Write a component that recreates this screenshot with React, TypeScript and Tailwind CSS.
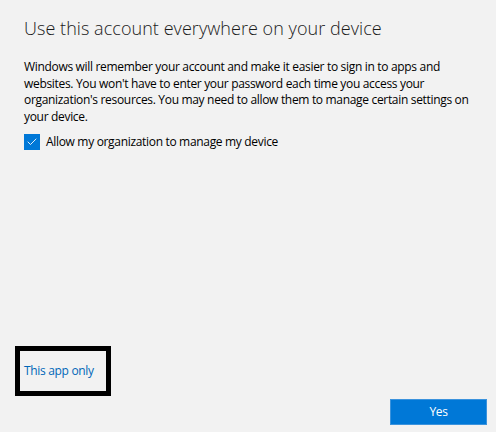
import { Check } from "lucide-react";

const BODY = "font-['Open_Sans','Noto_Sans',sans-serif] text-[12px] tracking-[-0.32px]";

export default function App() {
  return (
    <div className="flex h-[432px] w-[496px] flex-col bg-[#f2f2f2] text-black font-['Open_Sans','Noto_Sans',sans-serif]">
      <div className="flex-1 pl-[24px] pt-[16px]">
        <h1 className="whitespace-nowrap text-[18px] font-light leading-[24px] tracking-[0.05px] text-[#1a1a1a]">
          Use this account everywhere on your device
        </h1>
        <p className={`mt-[19px] whitespace-nowrap leading-[16.5px] ${BODY}`}>
          Windows will remember your account and make it easier to sign in to apps and
          <br />
          websites. You won't have to enter your password each time you access your
          <br />
          organization's resources. You may need to allow them to manage certain settings on
          <br />
          your device.
        </p>
        <label className={`mt-[9px] flex h-[16px] items-center gap-[6px] ${BODY}`}>
          <span className="flex h-[16px] w-[16px] shrink-0 items-center justify-center bg-[#0078d7]">
            <Check className="h-[12px] w-[12px] text-white" strokeWidth={1.75} />
          </span>
          Allow my organization to manage my device
        </label>
      </div>
      <div className="pl-[15px]">
        <div className="flex h-[50px] w-[96px] items-center border-[5px] border-black pl-[4px]">
          <a className={`text-[#0067b8] ${BODY}`}>This app only</a>
        </div>
      </div>
      <div className="flex justify-end pb-[7px] pr-[9px] pt-[3px]">
        <button className={`h-[26px] w-[97px] border border-[#3b93dd] bg-[#0078d7] text-white ${BODY}`}>
          Yes
        </button>
      </div>
    </div>
  );
}
